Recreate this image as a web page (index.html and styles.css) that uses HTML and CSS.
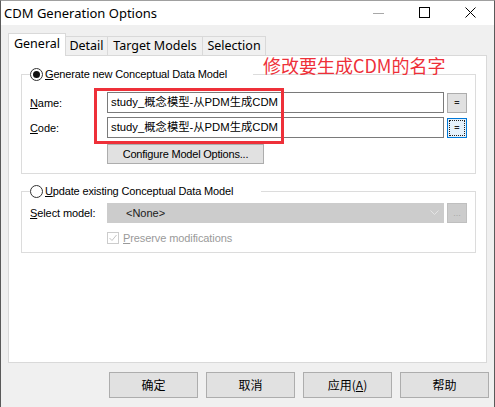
FILE: index.html
```html
<!DOCTYPE html>
<html>
<head>
<meta charset="utf-8">
<link rel="stylesheet" href="styles.css">
</head>
<body>
<div class="window">
  <div class="titlebar">
    <span class="title">CDM Generation Options</span>
    <div class="controls">
      <span class="ctl"><svg width="12" height="12" viewBox="0 0 12 12"><path d="M0 6.5H11" stroke="#a8a8a8" stroke-width="1"/></svg></span>
      <span class="ctl"><svg width="12" height="12" viewBox="0 0 12 12"><rect x="0.5" y="0.5" width="10" height="10" fill="none" stroke="#000" stroke-width="1"/></svg></span>
      <span class="ctl"><svg width="12" height="12" viewBox="0 0 12 12"><path d="M0.5 0.5L10.5 10.5M10.5 0.5L0.5 10.5" stroke="#000" stroke-width="1"/></svg></span>
    </div>
  </div>
  <div class="client">
    <div class="tabs">
      <div class="tab tab-active">General</div>
      <div class="tab tab-detail">Detail</div>
      <div class="tab tab-target">Target Models</div>
      <div class="tab tab-selection">Selection</div>
    </div>
    <div class="panel">
      <fieldset class="group group-new">
        <legend class="legend legend-new">
          <span class="radio radio-on"><span class="dot"></span></span>
          <span class="legend-text"><u>G</u>enerate new Conceptual Data Model</span>
        </legend>
        <div class="row">
          <label class="lbl"><u>N</u>ame:</label>
          <div class="input">study_概念模型-从PDM生成CDM</div>
          <div class="eqbtn">=</div>
        </div>
        <div class="row row-gap">
          <label class="lbl"><u>C</u>ode:</label>
          <div class="input">study_概念模型-从PDM生成CDM</div>
          <div class="eqbtn eqbtn-focus"><span class="focusrect">=</span></div>
        </div>
        <div class="cfg-row">
          <div class="btn cfg-btn">Configure Model Options...</div>
        </div>
      </fieldset>

      <fieldset class="group group-upd">
        <legend class="legend legend-upd">
          <span class="radio"></span>
          <span class="legend-text"><u>U</u>pdate existing Conceptual Data Model</span>
        </legend>
        <div class="row row-sel">
          <label class="lbl"><u>S</u>elect model:</label>
          <div class="combo">
            <span class="combo-text">&lt;None&gt;</span>
            <svg class="chev" width="9" height="6" viewBox="0 0 9 6"><path d="M0.5 0.5L4.5 4.5L8.5 0.5" fill="none" stroke="#e4e4e4" stroke-width="1"/></svg>
          </div>
          <div class="dotsbtn">...</div>
        </div>
        <div class="chk-row">
          <span class="chk"><svg width="10" height="10" viewBox="0 0 10 10"><path d="M1.5 5L4 7.5L8.5 2" fill="none" stroke="#c4c4c4" stroke-width="1"/></svg></span>
          <span class="chk-text"><u>P</u>reserve modifications</span>
        </div>
      </fieldset>
    </div>
    <div class="buttons">
      <div class="btn dlg-btn">确定</div>
      <div class="btn dlg-btn">取消</div>
      <div class="btn dlg-btn">应用(<u>A</u>)</div>
      <div class="btn dlg-btn">帮助</div>
    </div>
  </div>

  <div class="anno-box"></div>
  <div class="anno-text">修改要生成CDM的名字</div>
</div>
</body>
</html>
```

FILE: styles.css
```css
* { box-sizing: border-box; }
html, body { margin: 0; padding: 0; }
body {
  width: 495px;
  height: 407px;
  overflow: hidden;
  background: #f0f0f0;
  font-family: "Liberation Sans", "Noto Sans CJK SC", sans-serif;
  font-size: 11px;
  color: #000;
}
.window {
  position: relative;
  width: 495px;
  height: 407px;
  border-left: 1px solid #5a5a5a;
  border-right: 1px solid #5a5a5a;
  border-top: 1px solid #a0a0a0;
  background: #f0f0f0;
  display: flex;
  flex-direction: column;
}
.titlebar {
  height: 24px;
  background: #fff;
  display: flex;
  align-items: center;
  flex: none;
}
.title {
  padding-left: 3px;
  font-family: "Noto Sans", sans-serif;
  font-size: 13px;
  color: #000;
  line-height: 24px;
}
.controls {
  margin-left: auto;
  display: flex;
  height: 24px;
}
.ctl {
  width: 46px;
  height: 24px;
  display: flex;
  align-items: center;
  justify-content: center;
}
.ctl svg { display: block; }

.client {
  flex: 1;
  padding: 0 5px 0 7px;
  display: flex;
  flex-direction: column;
}
.tabs {
  margin-top: 8px;
  height: 23px;
  display: flex;
  align-items: flex-end;
  font-family: "Noto Sans", sans-serif;
  font-size: 12.5px;
}
.tab {
  height: 19px;
  margin-bottom: 1px;
  border: 1px solid #d9d9d9;
  border-bottom: none;
  background: #f0f0f0;
  line-height: 18px;
  text-align: center;
  color: #000;
  margin-left: -1px;
}
.tab-active {
  position: relative;
  z-index: 1;
  height: 23px;
  margin-bottom: 0;
  margin-left: 0;
  width: 58px;
  background: #fff;
  line-height: 20px;
  padding-left: 0;
}
.tab-detail { width: 43px; }
.tab-target { width: 96px; }
.tab-selection { width: 64px; }

.panel {
  margin-top: -1px;
  margin-right: 2px;
  height: 308px;
  background: #fff;
  border: 1px solid #d9d9d9;
  padding: 0 10px 0 12px;
  flex: none;
}
.group {
  margin: 0;
  border: 1px solid #dcdcdc;
  padding: 10px 7px 9px 8px;
  min-width: 0;
}
.group-new { margin-top: 11px; }
.group-upd { margin-top: 10px; padding-top: 4px; padding-bottom: 7px; }
.legend {
  padding: 0;
  height: 15px;
  display: flex;
  align-items: center;
  line-height: 15px;
}
.legend-new { width: 223px; }
.legend-upd { width: 231px; }
.legend-text {
  margin-left: 2px;
  letter-spacing: -0.15px;
  white-space: nowrap;
}
.radio {
  width: 13px;
  height: 13px;
  border: 1px solid #333;
  border-radius: 50%;
  background: #fff;
  display: flex;
  align-items: center;
  justify-content: center;
  flex: none;
}
.radio .dot {
  width: 7px;
  height: 7px;
  border-radius: 50%;
  background: #111;
}
.row {
  display: flex;
  align-items: center;
  height: 21px;
}
.row-gap { margin-top: 4px; }
.lbl {
  width: 77px;
  flex: none;
  white-space: nowrap;
  letter-spacing: -0.1px;
}
.input {
  width: 337px;
  height: 21px;
  border: 1px solid #7a7a7a;
  background: #fff;
  padding-left: 3px;
  font-size: 11.3px;
  line-height: 19px;
  white-space: nowrap;
  overflow: hidden;
}
.eqbtn {
  width: 20px;
  height: 20px;
  margin-left: 3px;
  border: 1px solid #adadad;
  background: #e1e1e1;
  font-size: 9px;
  font-weight: bold;
  line-height: 18px;
  text-align: center;
  color: #222;
}
.eqbtn-focus {
  border-color: #0078d7;
  background: #e5f1fb;
  padding: 1px;
}
.focusrect {
  display: block;
  height: 16px;
  border: 1px dotted #222;
  line-height: 14px;
}
.cfg-row {
  margin-top: 6px;
  padding-left: 77px;
  display: flex;
}
.btn {
  border: 1px solid #adadad;
  background: #e1e1e1;
  text-align: center;
  color: #000;
}
.cfg-btn {
  width: 157px;
  height: 20px;
  line-height: 18px;
  letter-spacing: -0.2px;
}
.row-sel { height: 20px; }
.combo {
  width: 337px;
  height: 20px;
  background: #cccccc;
  border: 1px solid #cccccc;
  display: flex;
  align-items: center;
  padding-left: 18px;
  padding-right: 4px;
}
.combo-text { color: #1a1a1a; }
.chev { margin-left: auto; display: block; }
.dotsbtn {
  width: 20px;
  height: 20px;
  margin-left: 3px;
  background: #cccccc;
  border: 1px solid #bfbfbf;
  color: #a8a8a8;
  font-size: 9px;
  line-height: 18px;
  text-align: center;
}
.chk-row {
  margin-top: 8px;
  padding-left: 77px;
  display: flex;
  align-items: center;
  height: 14px;
}
.chk {
  width: 12px;
  height: 12px;
  border: 1px solid #cccccc;
  background: #fff;
  display: flex;
  align-items: center;
  justify-content: center;
}
.chk svg { display: block; }
.chk-text {
  margin-left: 4px;
  color: #9a9a9a;
  letter-spacing: -0.1px;
}
.buttons {
  margin-top: 9px;
  display: flex;
  justify-content: flex-end;
  gap: 8px;
}
.dlg-btn {
  width: 89px;
  height: 26px;
  line-height: 24px;
  font-size: 12px;
  font-family: "Noto Sans CJK SC", "Liberation Sans", sans-serif;
}
.anno-box {
  position: absolute;
  left: 93px;
  top: 87px;
  width: 190px;
  height: 56px;
  border: 3px solid #ee3039;
}
.anno-text {
  position: absolute;
  left: 262px;
  top: 53px;
  font-family: "Noto Sans CJK SC", sans-serif;
  font-size: 18px;
  line-height: 22px;
  color: #ee3039;
  white-space: nowrap;
}
```
